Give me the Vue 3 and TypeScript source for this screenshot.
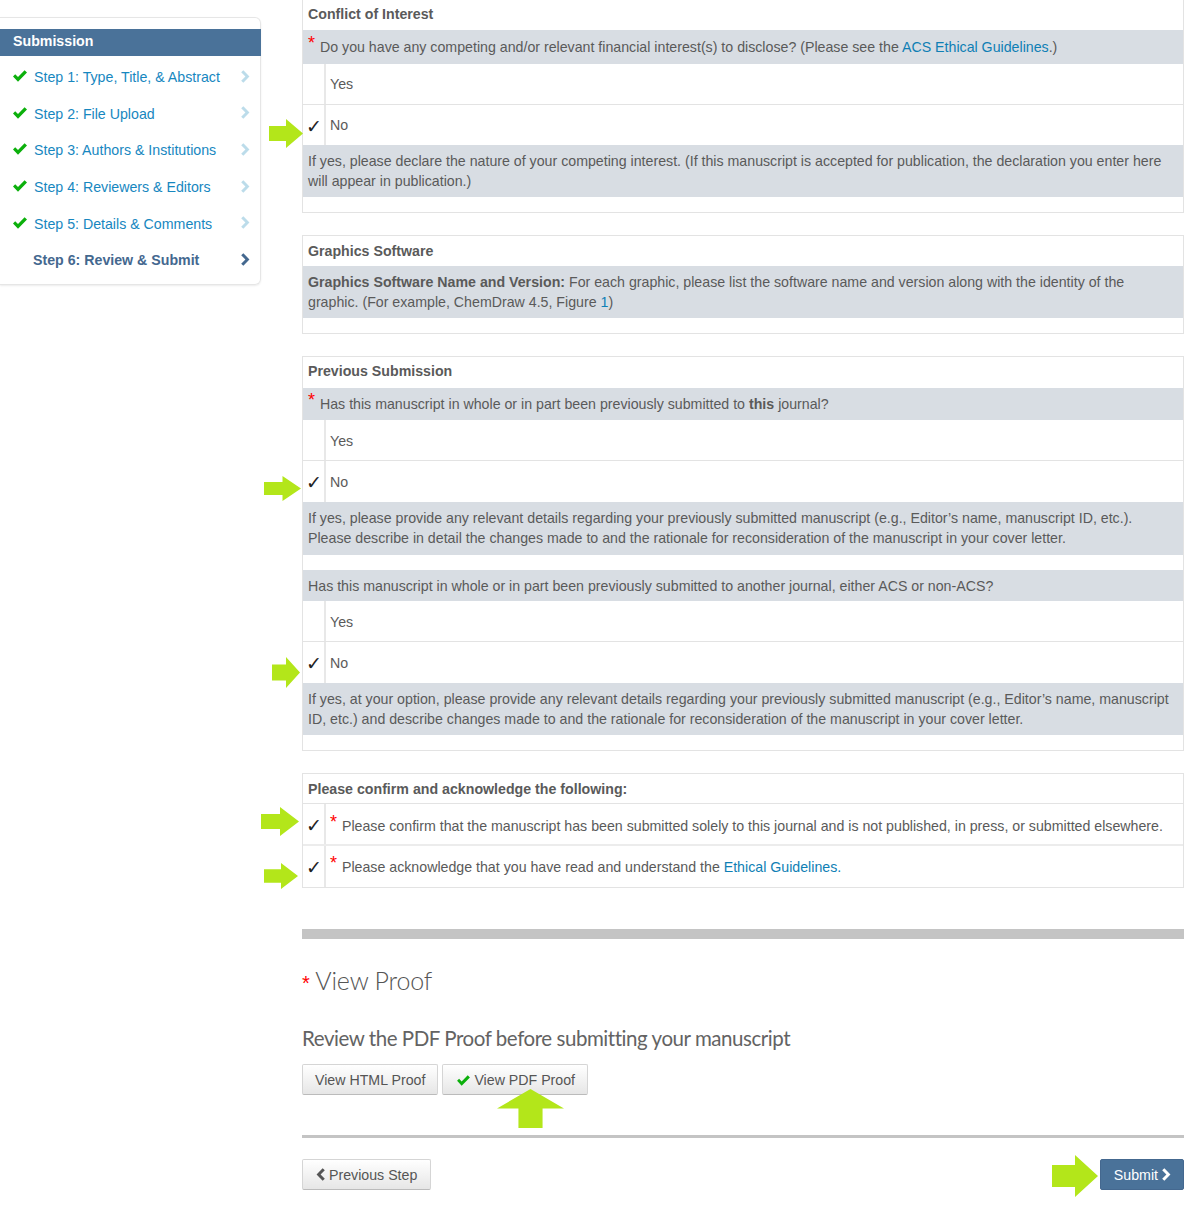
<script setup lang="ts">
type Step = { label: string; done: boolean };
type Arrow = { x: number; y: number; w: number; h: number; up?: boolean };

const steps: Step[] = [
  { label: 'Step 1: Type, Title, & Abstract', done: true },
  { label: 'Step 2: File Upload', done: true },
  { label: 'Step 3: Authors & Institutions', done: true },
  { label: 'Step 4: Reviewers & Editors', done: true },
  { label: 'Step 5: Details & Comments', done: true },
  { label: 'Step 6: Review & Submit', done: false },
];

// green annotation arrows drawn over the screenshot
const arrows: Arrow[] = [
  { x: 269, y: 119, w: 34, h: 29 },
  { x: 264, y: 476, w: 37, h: 25 },
  { x: 272, y: 657, w: 28, h: 31 },
  { x: 261, y: 807, w: 38, h: 29 },
  { x: 264, y: 863, w: 34, h: 26 },
  { x: 497, y: 1089, w: 67, h: 39, up: true },
  { x: 1052, y: 1155, w: 46, h: 42 },
];

const arrowStyle = (a: Arrow) => ({
  left: `${a.x}px`,
  top: `${a.y}px`,
  width: `${a.w}px`,
  height: `${a.h}px`,
});
</script>

<template>
  <div class="page">
    <aside class="sidebar">
      <div class="side-title">Submission</div>
      <ul class="steps">
        <li v-for="s in steps" :key="s.label" class="step" :class="{ current: !s.done }">
          <svg v-if="s.done" class="ok" viewBox="0 0 14 12"><path d="M0 6.4 2.2 4.2 5 7 11.6 0.2 14 2.6 5 11.8z" /></svg>
          <span v-else class="ok"></span>
          <span class="step-label">{{ s.label }}</span>
          <svg class="chev" viewBox="0 0 10 14"><path d="M2.6 0 9.4 7 2.6 14 0.2 11.6 4.9 7 0.2 2.4z" /></svg>
        </li>
      </ul>
    </aside>

    <main class="content">
      <section class="box first">
        <div class="box-head">Conflict of Interest</div>
        <div class="ask tall"><span class="req">*</span> Do you have any competing and/or relevant financial interest(s) to disclose? (Please see the <a>ACS Ethical Guidelines</a>.)</div>
        <div class="opt"><div class="tick"></div><div class="opt-text">Yes</div></div>
        <div class="opt no-line short"><div class="tick">✓</div><div class="opt-text">No</div></div>
        <div class="note">If yes, please declare the nature of your competing interest. (If this manuscript is accepted for publication, the declaration you enter here will appear in publication.)</div>
        <div class="blank"></div>
      </section>

      <section class="box">
        <div class="box-head low">Graphics Software</div>
        <div class="note"><b>Graphics Software Name and Version:</b> For each graphic, please list the software name and version along with the identity of the graphic. (For example, ChemDraw 4.5, Figure <a>1</a>)</div>
        <div class="blank"></div>
      </section>

      <section class="box prev">
        <div class="box-head wide">Previous Submission</div>
        <div class="ask"><span class="req">*</span> Has this manuscript in whole or in part been previously submitted to <b>this</b> journal?</div>
        <div class="opt"><div class="tick"></div><div class="opt-text">Yes</div></div>
        <div class="opt no-line"><div class="tick">✓</div><div class="opt-text">No</div></div>
        <div class="note big">If yes, please provide any relevant details regarding your previously submitted manuscript (e.g., Editor’s name, manuscript ID, etc.). Please describe in detail the changes made to and the rationale for reconsideration of the manuscript in your cover letter.</div>
        <div class="blank"></div>
        <div class="ask slim">Has this manuscript in whole or in part been previously submitted to another journal, either ACS or non-ACS?</div>
        <div class="opt"><div class="tick"></div><div class="opt-text">Yes</div></div>
        <div class="opt no-line"><div class="tick">✓</div><div class="opt-text">No</div></div>
        <div class="note">If yes, at your option, please provide any relevant details regarding your previously submitted manuscript (e.g., Editor’s name, manuscript ID, etc.) and describe changes made to and the rationale for reconsideration of the manuscript in your cover letter.</div>
        <div class="blank"></div>
      </section>

      <section class="box last">
        <div class="box-head low line">Please confirm and acknowledge the following:</div>
        <div class="opt confirm"><div class="tick">✓</div><div class="opt-text"><span class="req">*</span> Please confirm that the manuscript has been submitted solely to this journal and is not published, in press, or submitted elsewhere.</div></div>
        <div class="opt confirm"><div class="tick">✓</div><div class="opt-text"><span class="req">*</span> Please acknowledge that you have read and understand the <a>Ethical Guidelines.</a></div></div>
      </section>

      <div class="thick-rule"></div>

      <h2 class="proof-title"><span class="req-big">*</span> View Proof</h2>
      <h3 class="proof-sub">Review the PDF Proof before submitting your manuscript</h3>
      <div class="proof-btns">
        <button type="button" class="btn">View HTML Proof</button>
        <button type="button" class="btn pdf">
          <svg class="ok small" viewBox="0 0 14 12"><path d="M0 6.4 2.2 4.2 5 7 11.6 0.2 14 2.6 5 11.8z" /></svg>
          View PDF Proof
        </button>
      </div>

      <div class="thin-rule"></div>

      <div class="nav">
        <button type="button" class="btn step-btn">
          <svg class="btn-chev" viewBox="0 0 10 14"><path d="M7.4 0 0.6 7 7.4 14 9.8 11.6 5.1 7 9.8 2.4z" /></svg>
          Previous Step
        </button>
        <button type="button" class="btn step-btn primary">
          Submit
          <svg class="btn-chev" viewBox="0 0 10 14"><path d="M2.6 0 9.4 7 2.6 14 0.2 11.6 4.9 7 0.2 2.4z" /></svg>
        </button>
      </div>
    </main>

    <svg
      v-for="(a, i) in arrows"
      :key="i"
      class="arrow"
      :style="arrowStyle(a)"
      viewBox="0 0 100 100"
      preserveAspectRatio="none"
    >
      <polygon v-if="a.up" points="50,0 100,50 68,50 68,100 32,100 32,50 0,50" />
      <polygon v-else points="0,24 50,24 50,0 100,50 50,100 50,76 0,76" />
    </svg>
  </div>
</template>

<style scoped>
.page {
  position: relative;
  display: flex;
  align-items: flex-start;
  width: 1192px;
  height: 1217px;
  overflow: hidden;
  background: #fff;
  color: #5a5a5a;
  font-family: "Liberation Sans", Arial, sans-serif;
  font-size: 14.2px;
  line-height: 20px;
}

a {
  color: #0f7fb5;
}

.sidebar {
  width: 261px;
  height: 268px;
  margin-top: 17px;
  padding-top: 11px;
  box-sizing: border-box;
  border: 1px solid #e6e6e6;
  border-left: none;
  border-radius: 0 6px 6px 0;
  box-shadow: 0 1px 2px rgba(0, 0, 0, 0.08);
  flex-shrink: 0;
}

.side-title {
  height: 27px;
  line-height: 25px;
  padding-left: 13px;
  background: #4a7299;
  color: #fff;
  font-weight: 700;
  margin-right: -1px;
}

.steps {
  list-style: none;
  margin: 0;
  padding: 3px 0 0;
}

.step {
  display: flex;
  align-items: center;
  height: 36.6px;
  padding-left: 13px;
  color: #1787bf;
}

.step-label {
  flex: 1;
  margin-left: 7px;
}

.ok {
  width: 14px;
  height: 12px;
  margin-top: -2px;
  flex-shrink: 0;
  fill: #0cb00c;
}

.ok.small {
  width: 13px;
  height: 11px;
  margin-top: 1px;
}

.chev {
  width: 9px;
  height: 13px;
  margin-right: 10px;
  margin-top: -2px;
  fill: #bcdcea;
}

.current {
  color: #44688f;
  font-weight: 700;
}

.current .step-label {
  margin-left: 6px;
}

.current .chev {
  fill: #44688f;
}

.content {
  width: 882px;
  margin-left: 41px;
  flex-shrink: 0;
}

.box {
  border: 1px solid #e3e3e3;
  margin-bottom: 22px;
  width: 100%;
  box-sizing: border-box;
}

.box.first {
  border-top: none;
}

.box.last {
  margin-bottom: 41px;
}

.box-head {
  height: 30px;
  line-height: 29px;
  padding-left: 5px;
  font-weight: 700;
}

.box-head.low {
  line-height: 31px;
}

.box-head.wide {
  height: 31px;
}

.box-head.line {
  height: 29px;
  border-bottom: 1px solid #e3e3e3;
  box-sizing: content-box;
}

.ask {
  height: 32px;
  line-height: 33px;
  padding-left: 5px;
  background: #d8dde3;
  white-space: nowrap;
}

.ask.tall {
  height: 34px;
  line-height: 35px;
}

.ask.slim {
  height: 31px;
  line-height: 32px;
}

.req {
  color: #f00;
  font-size: 18px;
  line-height: 0;
  vertical-align: 3px;
  margin-right: 1px;
}

.opt {
  display: flex;
  height: 41px;
  box-sizing: border-box;
  border-bottom: 1px solid #e3e3e3;
}

.opt.no-line {
  border-bottom: none;
}

.opt.short {
  height: 40px;
}

.opt.confirm {
  height: 42px;
  border-bottom-width: 2px;
  border-bottom-color: #ececec;
}

.opt.confirm:last-child {
  height: 41px;
  border-bottom: none;
}

.tick {
  width: 21px;
  flex-shrink: 0;
  border-right: 2px solid #e8e8e8;
  text-align: center;
  text-indent: 1px;
  color: #222;
  font-family: "DejaVu Sans", sans-serif;
  font-size: 19px;
  line-height: 43px;
}

.opt-text {
  padding-left: 4px;
  line-height: 40px;
  white-space: nowrap;
}

.prev .opt-text {
  line-height: 42px;
}

.confirm .opt-text {
  line-height: 45px;
}

.confirm:last-child .opt-text {
  line-height: 43px;
}

.note {
  height: 52px;
  padding: 6px 5px 0;
  box-sizing: border-box;
  background: #d8dde3;
}

.note.big {
  height: 53px;
}

.blank {
  height: 15px;
}

.thick-rule {
  height: 10px;
  background: #c4c4c4;
}

.proof-title {
  margin: 25px 0 0;
  font-family: Lato, sans-serif;
  font-weight: 300;
  font-size: 25px;
  letter-spacing: -0.2px;
  line-height: 32px;
  color: #555;
}

.req-big {
  color: #f00;
  font-family: "Liberation Sans", sans-serif;
  font-size: 20px;
  font-weight: 400;
}

.proof-sub {
  margin: 25px 0 0;
  font-family: Lato, sans-serif;
  font-weight: 400;
  font-size: 20.5px;
  letter-spacing: -0.45px;
  line-height: 28px;
  color: #636363;
}

.proof-btns {
  display: flex;
  gap: 4px;
  margin-top: 12px;
}

.btn {
  height: 31px;
  padding: 0 12px;
  box-sizing: border-box;
  border: 1px solid #d5d5d5;
  border-bottom-color: #bbb;
  border-radius: 2px;
  background: linear-gradient(#fff, #e6e6e6);
  color: #555;
  font-family: inherit;
  font-size: 14.2px;
  display: inline-flex;
  align-items: center;
  gap: 4px;
}

.btn.pdf {
  padding: 0 12px 0 14px;
}

.btn.step-btn {
  padding: 0 13px;
}

.btn-chev {
  width: 9px;
  height: 13px;
  fill: #555;
}

.thin-rule {
  height: 3px;
  background: #c4c4c4;
  margin-top: 40px;
}

.nav {
  display: flex;
  justify-content: space-between;
  margin-top: 21px;
}

.btn.primary {
  padding: 0 12px 0 13px;
  background: #4a7299;
  border-color: #44688f;
  color: #fff;
}

.btn.primary .btn-chev {
  fill: #fff;
}

.arrow {
  position: absolute;
  fill: #b3e61a;
}
</style>

<style>
html,
body {
  margin: 0;
  background: #fff;
}
</style>
